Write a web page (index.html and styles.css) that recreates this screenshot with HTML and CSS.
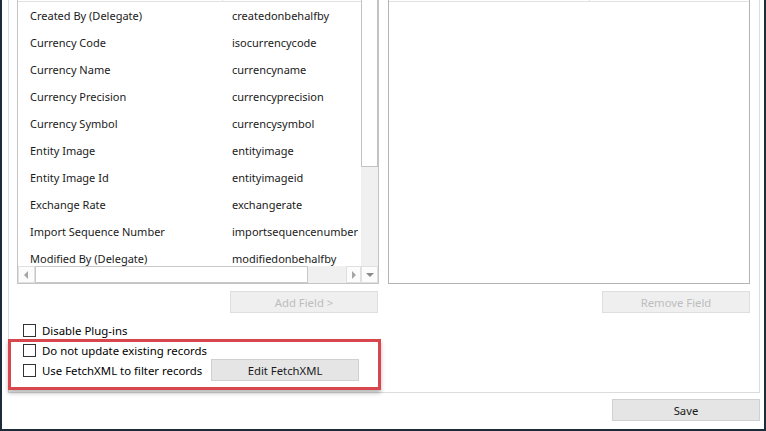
FILE: index.html
```html
<!DOCTYPE html>
<html>
<head>
<meta charset="utf-8">
<link rel="stylesheet" href="styles.css">
</head>
<body>
<div class="window">
  <div class="group">
    <div class="lists">
      <div class="list list-left">
        <div class="list-main">
          <div class="list-header">
            <div class="hcol hcol-1"></div>
            <div class="hcol hcol-2"></div>
          </div>
          <div class="list-rows">
            <div class="row"><span class="c1">Created By (Delegate)</span><span class="c2">createdonbehalfby</span></div>
            <div class="row"><span class="c1">Currency Code</span><span class="c2">isocurrencycode</span></div>
            <div class="row"><span class="c1">Currency Name</span><span class="c2">currencyname</span></div>
            <div class="row"><span class="c1">Currency Precision</span><span class="c2">currencyprecision</span></div>
            <div class="row"><span class="c1">Currency Symbol</span><span class="c2">currencysymbol</span></div>
            <div class="row"><span class="c1">Entity Image</span><span class="c2">entityimage</span></div>
            <div class="row"><span class="c1">Entity Image Id</span><span class="c2">entityimageid</span></div>
            <div class="row"><span class="c1">Exchange Rate</span><span class="c2">exchangerate</span></div>
            <div class="row"><span class="c1">Import Sequence Number</span><span class="c2">importsequencenumber</span></div>
            <div class="row"><span class="c1">Modified By (Delegate)</span><span class="c2">modifiedonbehalfby</span></div>
          </div>
          <div class="hscroll">
            <div class="sbtn"><svg width="5" height="8" viewBox="0 0 5 8"><path d="M4 0V8L0 4Z" fill="#a6a6a6"/></svg></div>
            <div class="hthumb"></div>
            <div class="htrack"></div>
            <div class="sbtn sbtn-r"><svg width="5" height="8" viewBox="0 0 5 8"><path d="M1 0V8L5 4Z" fill="#a6a6a6"/></svg></div>
          </div>
        </div>
        <div class="vscroll">
          <div class="vthumb"></div>
          <div class="vtrack"></div>
          <div class="sbtn sbtn-v"><svg width="8" height="5" viewBox="0 0 8 5"><path d="M0 1H8L4 5Z" fill="#8a8a8a"/></svg></div>
        </div>
      </div>
      <div class="list list-right">
        <div class="list-main">
          <div class="list-header">
            <div class="hcol hcol-r1"></div>
            <div class="hcol hcol-2"></div>
          </div>
        </div>
      </div>
    </div>
    <div class="actions">
      <div class="action-cell"><button class="btn btn-disabled btn-add">Add Field &gt;</button></div>
      <div class="action-cell"><button class="btn btn-disabled">Remove Field</button></div>
    </div>
    <div class="options">
      <label class="opt"><span class="box"></span><span class="opt-text">Disable Plug-ins</span></label>
      <label class="opt"><span class="box"></span><span class="opt-text">Do not update existing records</span></label>
      <div class="opt opt-fetch">
        <span class="box"></span><span class="opt-text">Use FetchXML to filter records</span>
        <button class="btn btn-fetch">Edit FetchXML</button>
      </div>
    </div>
  </div>
  <div class="footer">
    <button class="btn btn-save">Save</button>
  </div>
</div>
<div class="highlight"></div>
</body>
</html>
```
FILE: styles.css
```css
html, body {
  margin: 0;
  padding: 0;
}
body {
  width: 766px;
  height: 431px;
  overflow: hidden;
  background: #ffffff;
  font-family: "Segoe UI", "Noto Sans", "Open Sans", sans-serif;
  font-size: 11px;
  color: #1a1a1a;
  position: relative;
}
.window {
  box-sizing: border-box;
  width: 766px;
  height: 431px;
  border-left: 2px solid #1d2c3b;
  border-right: 2px solid #1d2c3b;
  border-bottom: 2px solid #1d2c3b;
  overflow: hidden;
  display: flex;
  flex-direction: column;
}
.group {
  margin: 0 4px 0 6px;
  border: 1px solid #dcdcdc;
  border-top: none;
  padding: 0 9px 12px 8px;
}
.lists {
  margin-top: -22px;
  height: 306px;
  display: flex;
  gap: 9px;
}
.list {
  box-sizing: border-box;
  width: 362px;
  height: 306px;
  border: 1px solid #c4c4c4;
  display: flex;
  background: #fff;
}
.list-right {
  border-color: #b4b4b4;
}
.list-main {
  flex: 1;
  min-width: 0;
  display: flex;
  flex-direction: column;
}
.list-header {
  height: 22px;
  border-bottom: 1px solid #e2e2e2;
  display: flex;
  flex: none;
}
.hcol {
  height: 100%;
}
.hcol-1 {
  width: 204px;
  border-right: 1px solid #e2e2e2;
}
.hcol-r1 {
  width: 200px;
  border-right: 1px solid #e2e2e2;
}
.list-rows {
  height: 264px;
  overflow: hidden;
  flex: none;
}
.row {
  height: 27px;
  display: flex;
  align-items: center;
  white-space: nowrap;
}
.c1 {
  width: 193px;
  padding-left: 12px;
  flex: none;
}
.c2 {
  padding-left: 9px;
}
.hscroll {
  height: 17px;
  flex: none;
  display: flex;
  background: #f0f0f0;
}
.sbtn {
  box-sizing: border-box;
  width: 17px;
  height: 17px;
  border: 1px solid #e0e0e0;
  background: #fcfcfc;
  display: flex;
  align-items: center;
  justify-content: center;
  flex: none;
}
.sbtn-r {
  width: 15px;
}
.hthumb {
  box-sizing: border-box;
  width: 273px;
  height: 17px;
  border: 1px solid #c8c8c8;
  background: #ffffff;
  flex: none;
}
.htrack {
  flex: 1;
}
.vscroll {
  width: 17px;
  flex: none;
  display: flex;
  flex-direction: column;
  background: #f0f0f0;
}
.vthumb {
  box-sizing: border-box;
  height: 188px;
  border: 1px solid #c2c2c2;
  background: #ffffff;
  flex: none;
}
.vtrack {
  flex: 1;
}
.actions {
  display: flex;
  gap: 9px;
  margin-top: 7px;
}
.action-cell {
  width: 362px;
  display: flex;
  justify-content: flex-end;
}
.btn {
  box-sizing: border-box;
  width: 148px;
  height: 22px;
  font-family: inherit;
  font-size: 11.3px;
  padding: 0;
  margin: 0;
  border-radius: 0;
}
.btn-disabled {
  background: #efefef;
  border: 1px solid #dedede;
  color: #bdbdbd;
}
.btn-add {
  margin-right: 1px;
}
.options {
  margin-top: 7px;
  padding-left: 6px;
  font-size: 11.4px;
}
.opt {
  height: 20px;
  display: flex;
  align-items: center;
  color: #000;
  white-space: nowrap;
}
.box {
  box-sizing: border-box;
  width: 13px;
  height: 13px;
  border: 1px solid #333333;
  background: #fff;
  flex: none;
}
.opt-text {
  margin-left: 6px;
}
.opt-fetch .opt-text {
  width: 169px;
  flex: none;
}
.btn-fetch {
  background: #e5e5e5;
  border: 1px solid #d0d0d0;
  color: #1a1a1a;
  margin: -1px 0;
  flex: none;
}
.footer {
  display: flex;
  justify-content: flex-end;
  padding: 6px 4px 0 0;
}
.btn-save {
  width: 148px;
  background: #e5e5e5;
  border: 1px solid #d0d0d0;
  color: #1a1a1a;
}
.highlight {
  position: absolute;
  left: 8px;
  top: 339px;
  width: 373px;
  height: 51px;
  box-sizing: border-box;
  border: 3px solid #d9474e;
  box-shadow: 0 3px 4px rgba(0, 0, 0, 0.28);
  pointer-events: none;
}
```
